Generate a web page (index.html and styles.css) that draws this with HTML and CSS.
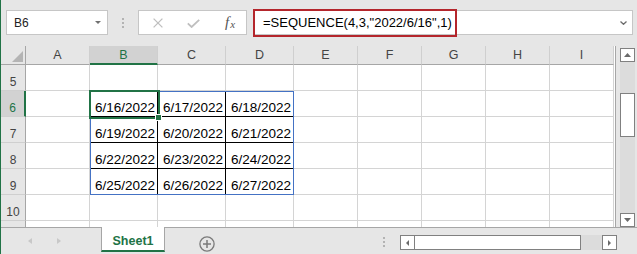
FILE: index.html
```html
<!DOCTYPE html>
<html lang="en">
<head>
<meta charset="utf-8">
<title>SEQUENCE dates</title>
<link rel="stylesheet" href="styles.css">
</head>
<body>
<div class="app">
  <div class="topbar">
    <div class="namebox"><span>B6</span><svg width="6" height="3" viewBox="0 0 6 3"><polygon points="0,0 6,0 3,3" fill="#707070"/></svg></div>
    <div class="vdots"><i></i><i></i><i></i></div>
    <div class="fxbox">
      <svg class="ic-x" width="10" height="10" viewBox="0 0 10 10"><path d="M0.6 0.6L9.4 9.4M9.4 0.6L0.6 9.4" stroke="#bfbfbf" stroke-width="1.3" fill="none"/></svg>
      <svg class="ic-ok" width="13" height="9" viewBox="0 0 13 9"><path d="M0.8 4.4L4.6 8L12.2 0.8" stroke="#bfbfbf" stroke-width="1.8" fill="none"/></svg>
      <span class="fx"><i>f</i><i class="fxx">x</i></span>
    </div>
    <div class="formula">
      <div class="fhl">=SEQUENCE(4,3,"2022/6/16",1)</div>
      <svg class="chev" width="7" height="4" viewBox="0 0 7 4"><path d="M0.5 0.5L3.5 3.3L6.5 0.5" stroke="#6d6d6d" stroke-width="1.3" fill="none"/></svg>
    </div>
  </div>

  <div class="main">
    <div class="sheet">
      <div class="stack">
        <div class="grid">
          <div class="corner"><svg width="11" height="11" viewBox="0 0 11 11"><polygon points="11,0 11,11 0,11" fill="#b4b4b4"/></svg></div>
          <div class="ch">A</div><div class="ch sel">B</div><div class="ch">C</div><div class="ch">D</div><div class="ch">E</div><div class="ch">F</div><div class="ch">G</div><div class="ch">H</div><div class="ch">I</div>

          <div class="rh">5</div>
          <div class="c"></div><div class="c"></div><div class="c"></div><div class="c"></div><div class="c"></div><div class="c"></div><div class="c"></div><div class="c"></div><div class="c"></div>

          <div class="rh sel">6</div>
          <div class="c"></div>
          <div class="c d bx by">6/16/2022</div><div class="c d bx by">6/17/2022</div><div class="c d by">6/18/2022</div>
          <div class="c"></div><div class="c"></div><div class="c"></div><div class="c"></div><div class="c"></div>

          <div class="rh">7</div>
          <div class="c"></div>
          <div class="c d bx by">6/19/2022</div><div class="c d bx by">6/20/2022</div><div class="c d by">6/21/2022</div>
          <div class="c"></div><div class="c"></div><div class="c"></div><div class="c"></div><div class="c"></div>

          <div class="rh">8</div>
          <div class="c"></div>
          <div class="c d bx by">6/22/2022</div><div class="c d bx by">6/23/2022</div><div class="c d by">6/24/2022</div>
          <div class="c"></div><div class="c"></div><div class="c"></div><div class="c"></div><div class="c"></div>

          <div class="rh">9</div>
          <div class="c"></div>
          <div class="c d bx">6/25/2022</div><div class="c d bx">6/26/2022</div><div class="c d">6/27/2022</div>
          <div class="c"></div><div class="c"></div><div class="c"></div><div class="c"></div><div class="c"></div>

          <div class="rh">10</div>
          <div class="c"></div><div class="c"></div><div class="c"></div><div class="c"></div><div class="c"></div><div class="c"></div><div class="c"></div><div class="c"></div><div class="c"></div>

          <div class="rh"></div>
          <div class="c"></div><div class="c"></div><div class="c"></div><div class="c"></div><div class="c"></div><div class="c"></div><div class="c"></div><div class="c"></div><div class="c"></div>
        </div>
        <div class="overlay">
          <div class="spill"></div>
          <div class="selbox"><i class="handle"></i></div>
        </div>
      </div>
    </div>
    <div class="vscroll">
      <div class="vbtn"><svg width="7" height="4" viewBox="0 0 7 4"><polygon points="0,4 7,4 3.5,0" fill="#6a6a6a"/></svg></div>
      <div class="vtrack"><div class="vthumb"></div></div>
      <div class="vbtn"><svg width="7" height="4" viewBox="0 0 7 4"><polygon points="0,0 7,0 3.5,4" fill="#6a6a6a"/></svg></div>
    </div>
  </div>

  <div class="tabbar">
    <div class="tabnav">
      <svg width="4" height="6" viewBox="0 0 4 6"><polygon points="4,0 4,6 0,3" fill="#c8c8c8"/></svg>
      <svg class="nav-next" width="4" height="6" viewBox="0 0 4 6"><polygon points="0,0 0,6 4,3" fill="#c8c8c8"/></svg>
    </div>
    <div class="tab">Sheet1</div>
    <svg class="addsheet" width="16" height="16" viewBox="0 0 16 16"><circle cx="8" cy="8" r="7.1" stroke="#7a7a7a" stroke-width="1.3" fill="none"/><path d="M4 8H12M8 4V12" stroke="#7a7a7a" stroke-width="1.5"/></svg>
    <div class="hdots"><i></i><i></i><i></i></div>
    <div class="hscroll">
      <div class="hbtn"><svg width="3" height="6" viewBox="0 0 3 6"><polygon points="3,0 3,6 0,3" fill="#6a6a6a"/></svg></div>
      <div class="hthumb"></div>
      <div class="htrack"></div>
      <div class="hbtn"><svg width="3" height="6" viewBox="0 0 3 6"><polygon points="0,0 0,6 3,3" fill="#6a6a6a"/></svg></div>
    </div>
  </div>
</div>
</body>
</html>
```

FILE: styles.css
```css
* { box-sizing: border-box; }
html, body { margin: 0; padding: 0; }
body {
  width: 637px;
  height: 254px;
  overflow: hidden;
  background: #e6e6e6;
  font-family: "Liberation Sans", Arial, sans-serif;
}
.app {
  width: 637px;
  height: 254px;
  border-left: 1px solid #217346;
  display: flex;
  flex-direction: column;
}

/* ---------- top bar ---------- */
.topbar {
  height: 46px;
  flex: none;
  padding: 10px 0 0 5px;
  display: flex;
  align-items: flex-start;
}
.namebox {
  width: 102px;
  height: 25px;
  border: 1px solid #c6c6c6;
  background: #fff;
  display: flex;
  align-items: center;
  justify-content: space-between;
  padding: 0 6px 0 7px;
  font-size: 12px;
  color: #222;
}
.vdots {
  width: 2px;
  margin: 8px 14px 0 14px;
  display: flex;
  flex-direction: column;
  gap: 2px;
}
.vdots i, .hdots i {
  display: block;
  width: 2px;
  height: 2px;
  background: #b3b3b3;
}
.fxbox {
  width: 109px;
  height: 25px;
  border: 1px solid #c6c6c6;
  background: #fff;
  display: flex;
  align-items: center;
  padding-left: 14px;
}
.ic-ok { margin-left: 24px; margin-top: 2px; }
.fx {
  margin-left: 25px;
  font-family: "Liberation Serif", "Times New Roman", serif;
  color: #555;
  font-size: 15px;
  line-height: 15px;
  display: flex;
  align-items: flex-end;
}
.fx i { font-style: italic; }
.fx .fxx { font-size: 11px; line-height: 11px; margin-left: 1px; }
.formula {
  margin-left: 6px;
  width: 380px;
  height: 25px;
  border: 1px solid #c6c6c6;
  background: #fff;
  display: flex;
  align-items: center;
}
.fhl {
  flex: none;
  width: 204px;
  height: 28px;
  margin-left: -1px;
  border: 2px solid #b4262c;
  padding-left: 8px;
  display: flex;
  align-items: center;
  font-size: 13px;
  color: #000;
  white-space: nowrap;
}
.chev { margin-left: auto; margin-right: 5px; }

/* ---------- sheet ---------- */
.main {
  height: 181px;
  flex: none;
  display: flex;
}
.sheet {
  width: 615px;
  height: 181px;
  flex: none;
  background: #fff;
  border-right: 1px solid #a6a6a6;
  padding-right: 1px;
  overflow: hidden;
}
.stack { display: grid; }
.grid, .overlay {
  grid-area: 1 / 1;
  display: grid;
  grid-template-columns: 25px 64px 68px 68px 68px 64px 64px 64px 64px 64px;
  grid-template-rows: 19px repeat(7, 26px);
}
.overlay { pointer-events: none; }

.corner {
  background: #e6e6e6;
  border-right: 1px solid #a6a6a6;
  border-bottom: 1px solid #a6a6a6;
  display: flex;
  align-items: flex-end;
  justify-content: flex-end;
  padding: 0 2px 2px 0;
}
.ch {
  background: #e6e6e6;
  border-right: 1px solid #cfcfcf;
  border-bottom: 1px solid #a6a6a6;
  display: flex;
  align-items: center;
  justify-content: center;
  font-size: 12.5px;
  color: #444;
}
.ch.sel {
  background: #d2d2d2;
  border-bottom: 2px solid #217346;
  color: #217346;
}
.rh {
  background: #e6e6e6;
  border-right: 1px solid #a6a6a6;
  border-bottom: 1px solid #cfcfcf;
  display: flex;
  align-items: flex-end;
  justify-content: center;
  font-size: 12px;
  line-height: 16px;
  color: #444;
}
.rh.sel {
  background: #d2d2d2;
  border-right: 2px solid #217346;
  color: #217346;
}
.c {
  background: #fff;
  border-right: 1px solid #d4d4d4;
  border-bottom: 1px solid #d4d4d4;
}
.d {
  display: flex;
  align-items: flex-end;
  justify-content: flex-end;
  padding-right: 2px;
  font-size: 13.5px;
  line-height: 16px;
  color: #000;
  white-space: nowrap;
}
.bx { border-right-color: #000; }
.by { border-bottom-color: #000; }

.spill {
  grid-column: 3 / 6;
  grid-row: 3 / 7;
  border: 1px solid #4472c4;
}
.selbox {
  grid-column: 3;
  grid-row: 3;
  margin: -1px -2px -2px -1px;
  border: 2px solid #217346;
  position: relative;
}
.handle {
  position: absolute;
  right: -4px;
  bottom: -4px;
  width: 7px;
  height: 7px;
  background: #217346;
  border: 1px solid #fff;
}

/* ---------- vertical scrollbar ---------- */
.vscroll {
  width: 15px;
  height: 179px;
  margin: 2px 0 0 4px;
  display: flex;
  flex-direction: column;
}
.vbtn {
  height: 14px;
  flex: none;
  border: 1px solid #808080;
  background: #fff;
  display: flex;
  align-items: center;
  justify-content: center;
}
.vtrack {
  flex: 1;
  background: #dcdcdc;
}
.vthumb {
  margin-top: 31px;
  height: 44px;
  border: 1px solid #808080;
  background: #fff;
}

/* ---------- tab bar ---------- */
.tabbar {
  height: 27px;
  flex: none;
  border-top: 1px solid #a6a6a6;
  display: flex;
  align-items: flex-start;
}
.tabnav {
  width: 100px;
  height: 26px;
  flex: none;
  display: flex;
  align-items: center;
  padding-left: 27px;
}
.nav-next { margin-left: 25px; }
.tab {
  width: 64px;
  height: 25px;
  flex: none;
  margin-top: -1px;
  background: #fff;
  border: 1px solid #a6a6a6;
  border-top: none;
  border-bottom: 2px solid #217346;
  padding-top: 5px;
  display: flex;
  align-items: center;
  justify-content: center;
  font-weight: bold;
  font-size: 12.5px;
  color: #217346;
}
.addsheet { flex: none; margin: 8px 0 0 34px; }
.hdots {
  margin: 9px 15px 0 auto;
  width: 2px;
  display: flex;
  flex-direction: column;
  gap: 2px;
}
.hscroll {
  width: 217px;
  height: 15px;
  flex: none;
  margin: 7px 20px 0 0;
  display: flex;
}
.hbtn {
  width: 15px;
  height: 15px;
  flex: none;
  border: 1px solid #808080;
  background: #fff;
  display: flex;
  align-items: center;
  justify-content: center;
}
.hthumb {
  width: 167px;
  height: 15px;
  flex: none;
  margin-left: -1px;
  border: 1px solid #808080;
  background: #fff;
}
.htrack {
  flex: 1;
  background: #dcdcdc;
}
```
